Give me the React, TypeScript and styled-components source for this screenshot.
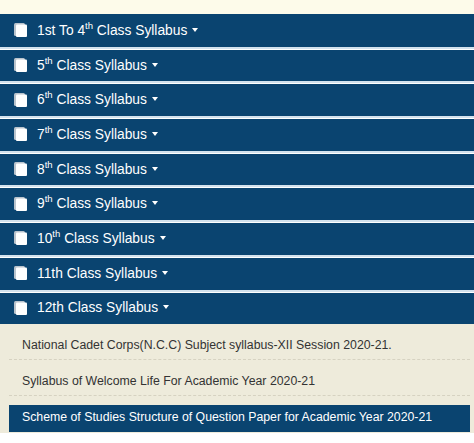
import styled, { createGlobalStyle } from "styled-components";

const GlobalStyle = createGlobalStyle`
  body {
    background: #ffffff;
    font-family: "Liberation Sans", Arial, sans-serif;
    margin: 0;
  }
`;

const TopStrip = styled.div`
  background: #fdfbea;
  height: 14px;
`;

const Menu = styled.ul`
  list-style: none;
  margin: 0;
  padding: 0;
`;

const Bar = styled.li<{ $first?: boolean }>`
  align-items: center;
  background: #0a4470;
  border-top: ${(p) => (p.$first ? "none" : "2px solid #d3e2ee")};
  box-shadow: ${(p) => (p.$first ? "none" : "inset 0 1px 0 #ffffff")};
  color: #ffffff;
  display: flex;
  font-size: 13.8px;
  height: 32.7px;
  padding-left: 14px;
`;

const Label = styled.span`
  margin-left: 10px;
  white-space: nowrap;

  sup {
    font-size: 9.5px;
    line-height: 0;
    vertical-align: 6px;
  }
`;

const Caret = styled.span`
  border-left: 3.5px solid transparent;
  border-right: 3.5px solid transparent;
  border-top: 4px solid #ffffff;
  display: inline-block;
  margin-left: 5px;
  vertical-align: 3px;
`;

const Submenu = styled.ul`
  background: #eeebdb;
  list-style: none;
  margin: 0;
  padding: 0 4px 1px 9px;
`;

const SubItem = styled.li<{ $active?: boolean }>`
  border-bottom: ${(p) => (p.$active ? "none" : "1px dashed #d6d2c1")};
  padding: ${(p) => (p.$active ? "9px 0 0" : "14px 0 6px")};
`;

const SubLink = styled.a<{ $active?: boolean }>`
  background: ${(p) => (p.$active ? "#0a4470" : "transparent")};
  color: ${(p) => (p.$active ? "#ffffff" : "#333333")};
  display: block;
  font-size: 12.3px;
  line-height: 15px;
  padding: ${(p) => (p.$active ? "5px 13px 7px" : "0 13px")};
  text-decoration: none;
  white-space: nowrap;
`;

function BookIcon() {
  return (
    <svg width="13" height="14" viewBox="0 0 13 14">
      <rect x="0" y="0" width="11" height="13" rx="1.5" fill="#b9c3cc" />
      <rect x="2" y="1.5" width="11" height="12.5" rx="1" fill="#ffffff" />
    </svg>
  );
}

type Row = { num: string; sup?: string; rest: string };

const rows: Row[] = [
  { num: "1st To 4", sup: "th", rest: " Class Syllabus" },
  { num: "5", sup: "th", rest: " Class Syllabus" },
  { num: "6", sup: "th", rest: " Class Syllabus" },
  { num: "7", sup: "th", rest: " Class Syllabus" },
  { num: "8", sup: "th", rest: " Class Syllabus" },
  { num: "9", sup: "th", rest: " Class Syllabus" },
  { num: "10", sup: "th", rest: " Class Syllabus" },
  { num: "11th", rest: " Class Syllabus" },
  { num: "12th", rest: " Class Syllabus" },
];

const links = [
  "National Cadet Corps(N.C.C) Subject syllabus-XII Session 2020-21.",
  "Syllabus of Welcome Life For Academic Year 2020-21",
  "Scheme of Studies Structure of Question Paper for Academic Year 2020-21",
];

export default function App() {
  return (
    <>
      <GlobalStyle />
      <TopStrip />
      <Menu>
        {rows.map((row, i) => (
          <Bar key={i} $first={i === 0}>
            <BookIcon />
            <Label>
              {row.num}
              {row.sup && <sup>{row.sup}</sup>}
              {row.rest}
              <Caret />
            </Label>
          </Bar>
        ))}
      </Menu>
      <Submenu>
        {links.map((text, i) => {
          const active = i === links.length - 1;
          return (
            <SubItem key={i} $active={active}>
              <SubLink href="#" $active={active}>
                {text}
              </SubLink>
            </SubItem>
          );
        })}
      </Submenu>
    </>
  );
}
